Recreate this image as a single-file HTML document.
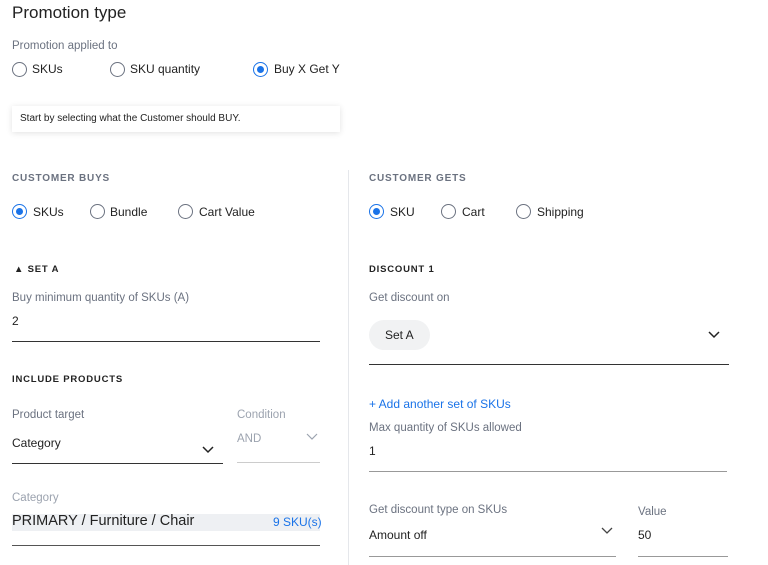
<!DOCTYPE html>
<html><head><meta charset="utf-8"><style>
*{margin:0;padding:0;box-sizing:border-box}
body{width:768px;height:565px;background:#fff;font-family:"Liberation Sans",sans-serif;color:#222;position:relative;overflow:hidden}
.a{position:absolute;white-space:nowrap}
.lbl{font-size:11.5px;color:#6b7280}
.txt{font-size:12px;color:#222}
.cap{font-size:10px;font-weight:bold;letter-spacing:.8px;color:#6b7280}
.capd{font-size:9.5px;font-weight:bold;letter-spacing:.8px;color:#222}
.r{position:absolute;width:15px;height:15px;border:1.3px solid #6b7280;border-radius:50%}
.r.on{border:1.5px solid #1a73e8}
.r.on:after{content:"";position:absolute;left:2.5px;top:2.5px;width:7px;height:7px;border-radius:50%;background:#1a73e8}
.line{position:absolute;height:1px;background:#333}
.lg{position:absolute;height:1px;background:#ccc}
.chev{position:absolute}
</style></head><body>
<div class="a" style="left:12px;top:3px;font-size:17px;color:#222">Promotion type</div>
<div class="a lbl" style="left:12px;top:40px">Promotion applied to</div>
<div class="r" style="left:12px;top:62px"></div><div class="a txt" style="left:32px;top:62px">SKUs</div>
<div class="r" style="left:110px;top:62px"></div><div class="a txt" style="left:130px;top:62px">SKU quantity</div>
<div class="r on" style="left:253px;top:62px"></div><div class="a txt" style="left:274px;top:62px">Buy X Get Y</div>
<div class="a" style="left:12px;top:106px;width:328px;height:26px;box-shadow:0 1px 6px rgba(0,0,0,.12);background:#fff"></div>
<div class="a" style="left:20px;top:113px;font-size:10px;color:#222">Start by selecting what the Customer should BUY.</div>

<div class="a" style="left:348px;top:170px;width:1px;height:395px;background:#e5e7eb"></div>

<div class="a cap" style="left:12px;top:173px">CUSTOMER BUYS</div>
<div class="r on" style="left:12px;top:204px"></div><div class="a txt" style="left:33px;top:205px">SKUs</div>
<div class="r" style="left:90px;top:204px"></div><div class="a txt" style="left:110px;top:205px">Bundle</div>
<div class="r" style="left:178px;top:204px"></div><div class="a txt" style="left:199px;top:205px">Cart Value</div>

<div class="a capd" style="left:14px;top:264px">▲ SET A</div>
<div class="a lbl" style="left:12px;top:292px">Buy minimum quantity of SKUs (A)</div>
<div class="a txt" style="left:12px;top:314px">2</div>
<div class="line" style="left:12px;top:341px;width:308px"></div>

<div class="a capd" style="left:12px;top:374px">INCLUDE PRODUCTS</div>
<div class="a lbl" style="left:12px;top:409px">Product target</div>
<div class="a txt" style="left:12px;top:436px">Category</div>
<svg class="chev" style="left:202px;top:446px" width="12" height="8"><path d="M1 1l5 5 5-5" stroke="#222" stroke-width="1.5" fill="none"/></svg>
<div class="line" style="left:12px;top:463px;width:211px"></div>
<div class="a lbl" style="left:237px;top:409px;color:#9ca3af">Condition</div>
<div class="a" style="left:237px;top:433px;font-size:11.5px;color:#9ca3af">AND</div>
<svg class="chev" style="left:306px;top:433px" width="12" height="8"><path d="M1 1l5 5 5-5" stroke="#9ca3af" stroke-width="1.2" fill="none"/></svg>
<div class="lg" style="left:237px;top:462px;width:83px"></div>
<div class="a lbl" style="left:12px;top:492px;color:#9ca3af">Category</div>
<div class="a" style="left:12px;top:514px;width:308px;height:17px;background:#eef0f3"></div>
<div class="a" style="left:12px;top:513px;font-size:14.5px;color:#222">PRIMARY / Furniture / Chair</div>
<div class="a" style="left:273px;top:515px;font-size:12px;color:#1a73e8">9 SKU(s)</div>
<div class="line" style="left:12px;top:545px;width:308px;background:#555"></div>

<div class="a cap" style="left:369px;top:173px">CUSTOMER GETS</div>
<div class="r on" style="left:369px;top:204px"></div><div class="a txt" style="left:390px;top:205px">SKU</div>
<div class="r" style="left:441px;top:204px"></div><div class="a txt" style="left:462px;top:205px">Cart</div>
<div class="r" style="left:516px;top:204px"></div><div class="a txt" style="left:537px;top:205px">Shipping</div>
<div class="a capd" style="left:369px;top:264px">DISCOUNT 1</div>
<div class="a lbl" style="left:369px;top:292px">Get discount on</div>
<div class="a" style="left:369px;top:320px;width:61px;height:30px;border-radius:15px;background:#f1f2f3"></div>
<div class="a txt" style="left:385px;top:328px">Set A</div>
<svg class="chev" style="left:708px;top:331px" width="12" height="8"><path d="M1 1l5 5 5-5" stroke="#222" stroke-width="1.5" fill="none"/></svg>
<div class="line" style="left:369px;top:364px;width:360px"></div>
<div class="a" style="left:369px;top:397px;font-size:12px;color:#1a73e8">+ Add another set of SKUs</div>
<div class="a lbl" style="left:369px;top:422px">Max quantity of SKUs allowed</div>
<div class="a txt" style="left:369px;top:444px">1</div>
<div class="lg" style="left:369px;top:471px;width:358px;background:#999"></div>
<div class="a lbl" style="left:369px;top:504px">Get discount type on SKUs</div>
<div class="a txt" style="left:369px;top:528px">Amount off</div>
<svg class="chev" style="left:601px;top:527px" width="12" height="8"><path d="M1 1l5 5 5-5" stroke="#444" stroke-width="1.3" fill="none"/></svg>
<div class="lg" style="left:369px;top:556px;width:247px;background:#999"></div>
<div class="a lbl" style="left:638px;top:506px">Value</div>
<div class="a txt" style="left:638px;top:528px">50</div>
<div class="lg" style="left:638px;top:556px;width:90px;background:#999"></div>
</body></html>
